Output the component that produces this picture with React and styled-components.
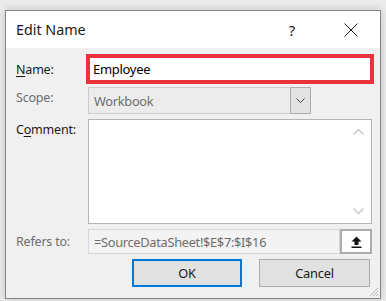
import React from 'react';
import styled, { createGlobalStyle } from 'styled-components';

const GlobalStyle = createGlobalStyle`
  html, body {
    margin: 0;
    padding: 0;
    background: #ebebeb;
  }
  * {
    box-sizing: border-box;
  }
`;

const Page = styled.div`
  padding: 10px 5px 2px 5px;
  font-family: 'Noto Sans', 'Open Sans', sans-serif;
`;

const Window = styled.div`
  width: 376px;
  height: 289px;
  border: 1px solid #858585;
  background: #f0f0f0;
  box-shadow: 0 0 8px rgba(0, 0, 0, 0.18);
  display: flex;
  flex-direction: column;
  position: relative;
`;

const TitleBar = styled.div`
  height: 37px;
  background: #ffffff;
  display: flex;
  align-items: center;
  padding-left: 10px;
`;

const Title = styled.div`
  flex: 1;
  font-size: 14.3px;
  color: #1a1a1a;
  padding-bottom: 1px;
`;

const HelpMark = styled.div`
  width: 20px;
  font-size: 15px;
  color: #1a1a1a;
  margin-right: 42px;
  text-align: center;
`;

const CloseBox = styled.div`
  width: 14px;
  height: 14px;
  margin-right: 22px;
  display: flex;
`;

const Body = styled.div`
  flex: 1;
  display: grid;
  grid-template-columns: 72px 1fr;
  grid-template-rows: 33px 32px 110px 30px auto;
  padding: 6px 8px 0 10px;
  font-size: 12.5px;
  letter-spacing: -0.2px;
`;

const Label = styled.div`
  color: ${(p) => (p.dim ? '#6d6d6d' : '#1a1a1a')};
  padding-top: ${(p) => p.top}px;
  u {
    text-decoration-thickness: 1px;
    text-underline-offset: 2px;
  }
`;

const NameField = styled.div`
  margin-left: -2px;
  margin-right: -2px;
  height: 30px;
  border: 4px solid #e8323c;
  background: #ffffff;
  color: #000;
  display: flex;
  align-items: center;
  padding-left: 3px;
  font-size: 13px;
  letter-spacing: -0.3px;
`;

const ComboRow = styled.div`
  height: 27px;
  width: 223px;
  display: flex;
`;

const ComboText = styled.div`
  flex: 1;
  border: 1px solid #cccccc;
  border-right: none;
  background: #ececec;
  color: #6d6d6d;
  display: flex;
  align-items: center;
  padding-left: 5px;
  font-size: 12.8px;
  letter-spacing: -0.3px;
`;

const ComboButton = styled.div`
  width: 21px;
  border: 1px solid #adadad;
  background: #e3e3e3;
  display: flex;
  align-items: center;
  justify-content: center;
`;

const CommentBox = styled.div`
  height: 105px;
  border: 1px solid #b4b4b4;
  background: #ffffff;
  display: flex;
  justify-content: flex-end;
`;

const ScrollTrack = styled.div`
  width: 26px;
  display: flex;
  flex-direction: column;
  justify-content: space-between;
  align-items: center;
  padding: 9px 0 9px 0;
`;

const RefRow = styled.div`
  height: 25px;
  display: flex;
`;

const RefText = styled.div`
  flex: 1;
  border: 1px solid #d7d7d7;
  background: #f3f3f3;
  color: #6d6d6d;
  display: flex;
  align-items: center;
  padding-left: 5px;
  font-size: 12.8px;
  letter-spacing: -0.3px;
`;

const CollapseButton = styled.div`
  width: 32px;
  border: 2px solid #adadad;
  background: #ffffff;
  display: flex;
  align-items: center;
  justify-content: center;
`;

const ButtonRow = styled.div`
  grid-column: 1 / 3;
  display: flex;
  justify-content: flex-end;
  gap: 17px;
  padding-right: 2px;
`;

const Button = styled.div`
  width: ${(p) => p.w}px;
  height: 28px;
  border: ${(p) => (p.primary ? '2px solid #0078d7' : '1px solid #adadad')};
  background: #e1e1e1;
  color: #1a1a1a;
  display: flex;
  align-items: center;
  justify-content: center;
  font-size: 12.8px;
`;

const Grip = styled.svg`
  position: absolute;
  right: 1px;
  bottom: 1px;
`;

const App = () => {
  return (
    <Page>
      <GlobalStyle />
      <Window>
        <TitleBar>
          <Title>Edit Name</Title>
          <HelpMark>?</HelpMark>
          <CloseBox>
            <svg width="14" height="14" viewBox="0 0 14 14">
              <path d="M0.5 0.5 L13.5 13.5 M13.5 0.5 L0.5 13.5" stroke="#1a1a1a" strokeWidth="1" />
            </svg>
          </CloseBox>
        </TitleBar>
        <Body>
          <Label top={7}>
            <u>N</u>ame:
          </Label>
          <div>
            <NameField>Employee</NameField>
          </div>

          <Label dim top={2}>Scope:</Label>
          <div>
            <ComboRow>
              <ComboText>Workbook</ComboText>
              <ComboButton>
                <svg width="9" height="5" viewBox="0 0 9 5">
                  <path d="M0.5 0.5 L4.5 4.5 L8.5 0.5" fill="none" stroke="#444" strokeWidth="1" />
                </svg>
              </ComboButton>
            </ComboRow>
          </div>

          <Label top={2}>
            C<u>o</u>mment:
          </Label>
          <div>
            <CommentBox>
              <ScrollTrack>
                <svg width="11" height="6" viewBox="0 0 11 6">
                  <path d="M0.5 5.5 L5.5 0.5 L10.5 5.5" fill="none" stroke="#c2c2c2" strokeWidth="1.2" />
                </svg>
                <svg width="11" height="6" viewBox="0 0 11 6">
                  <path d="M0.5 0.5 L5.5 5.5 L10.5 0.5" fill="none" stroke="#c2c2c2" strokeWidth="1.2" />
                </svg>
              </ScrollTrack>
            </CommentBox>
          </div>

          <Label dim top={4}>Refers to:</Label>
          <div>
            <RefRow>
              <RefText>=SourceDataSheet!$E$7:$I$16</RefText>
              <CollapseButton>
                <svg width="11" height="12" viewBox="0 0 11 12">
                  <path d="M5.5 0.5 L10.5 5.5 L7.5 5.5 L7.5 9 L3.5 9 L3.5 5.5 L0.5 5.5 Z" fill="#111" />
                  <rect x="0.5" y="10.5" width="10" height="1.5" fill="#111" />
                </svg>
              </CollapseButton>
            </RefRow>
          </div>

          <ButtonRow>
            <Button primary w={110}>OK</Button>
            <Button w={111}>Cancel</Button>
          </ButtonRow>
        </Body>
        <Grip width="11" height="11" viewBox="0 0 11 11">
          <path d="M10 2 L2 10 M10 5 L5 10 M10 8 L8 10" stroke="#b8b8b8" strokeWidth="1" />
        </Grip>
      </Window>
    </Page>
  );
};

export default App;
